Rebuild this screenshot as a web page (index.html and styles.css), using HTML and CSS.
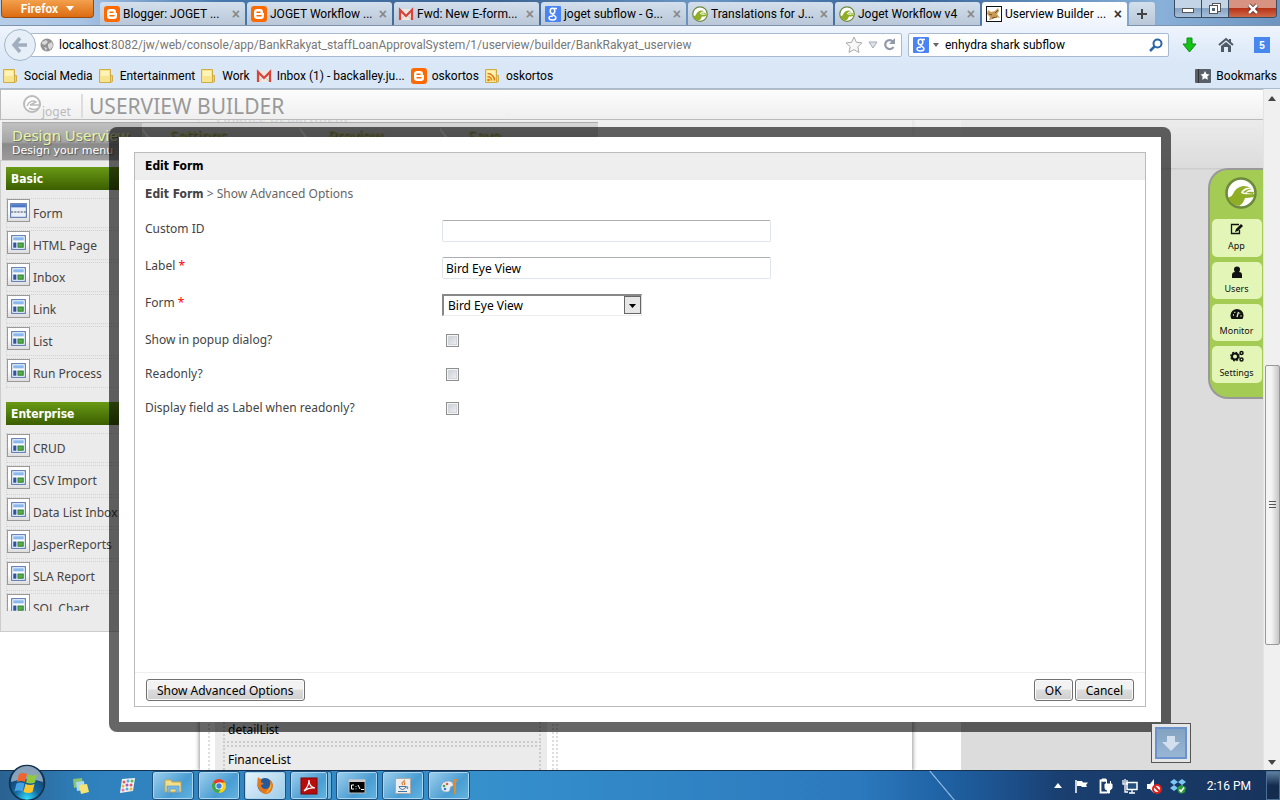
FILE: index.html
```html
<!DOCTYPE html>
<html lang="en">
<head>
    <meta charset="UTF-8">
    <meta name="viewport" content="width=device-width, initial-scale=1.0">
    <title>Userview Builder</title>
    <link rel="stylesheet" href="styles.css">
</head>
<body>
    <!-- shared icons -->
    <svg class="defs" width="0" height="0">
        <symbol id="blogger" viewBox="0 0 16 16">
            <rect width="16" height="16" rx="3" fill="#ff6a00"/>
            <path d="M6 3h3a3 3 0 0 1 3 3v1h1v3a3 3 0 0 1-3 3H6a3 3 0 0 1-3-3V6a3 3 0 0 1 3-3z" fill="#fff"/>
            <path d="M6 6.200h3M6 9.800h4" stroke="#ff6a00" stroke-width="1.400" stroke-linecap="round"/>
        </symbol>
        <symbol id="gmail" viewBox="0 0 16 16">
            <rect x="1" y="3" width="14" height="11" fill="#eee7e0"/>
            <path d="M3 13l5-5 5 5" fill="none" stroke="#cfc8c0"/>
            <path d="M2 14V4l6 6 6-6v10" fill="none" stroke="#d8433a" stroke-width="2.200"/>
        </symbol>
        <symbol id="google" viewBox="0 0 16 16">
            <rect width="16" height="16" rx="1" fill="#4a83f3"/>
            <ellipse cx="7.500" cy="5" rx="2.300" ry="2.700" fill="none" stroke="#fff" stroke-width="1.500"/>
            <path d="M9 2.500h3M8 8c-1 1 3 1.500 3 3.500s-1.500 2.500-3.500 2.500S4 13 4 11.800 6 10 8 10" fill="none" stroke="#fff" stroke-width="1.400"/>
        </symbol>
        <symbol id="joget" viewBox="0 0 32 32">
            <circle cx="16" cy="16" r="14.500" fill="#fff" stroke="#6c8a3c" stroke-width="2.500"/>
            <path d="M3 20q3 1 5-3 3-7 10-8 5 0 7 2-3-1-6 1-3 2-3 4 3 2 13 1v3q-6 1-9 1-2 6-6 8-9-1-11-9z" fill="#8fae26"/>
            <path d="M18 15q5-4 9-3-5 1-7 4zM21 16q3-2 8-1l-1 2z" fill="#8fae26"/>
        </symbol>
        <symbol id="folder" viewBox="0 0 16 16">
            <path d="M.5 1.500h11v13H.5z" fill="#f9e48e" stroke="#cfac45"/>
            <path d="M11.500 7.500h2v6l-2 1z" fill="#f0d36c" stroke="#cfac45"/>
            <path d="M2 3h8v5H2z" fill="#fff3b8"/>
        </symbol>
        <symbol id="widget" viewBox="0 0 20 20">
            <rect x="3.500" y="3.500" width="13" height="13" fill="#fff" stroke="#4a70b0"/>
            <rect x="5" y="5" width="10" height="3" fill="#8ab8ee"/>
            <rect x="5" y="10" width="3" height="5" fill="#2c55a4"/>
            <rect x="9.500" y="10.500" width="5" height="4" fill="#56ae4a" stroke="#35813a"/>
        </symbol>
    </svg>

    <header class="browser">
        <div class="tab-strip">
            <button class="firefox-button">Firefox <svg width="8" height="5"><path d="M0 0h8L4 5z" fill="#fff"/></svg></button>
            <div class="tabs">
                <button class="tab"><svg class="icon"><use href="#blogger"/></svg><span>Blogger: JOGET ...</span><i>×</i></button>
                <button class="tab"><svg class="icon"><use href="#blogger"/></svg><span>JOGET Workflow ...</span><i>×</i></button>
                <button class="tab"><svg class="icon"><use href="#gmail"/></svg><span>Fwd: New E-form...</span><i>×</i></button>
                <button class="tab"><svg class="icon"><use href="#google"/></svg><span>joget subflow - G...</span><i>×</i></button>
                <button class="tab"><svg class="icon"><use href="#joget"/></svg><span>Translations for J...</span><i>×</i></button>
                <button class="tab"><svg class="icon"><use href="#joget"/></svg><span>Joget Workflow v4</span><i>×</i></button>
                <button class="tab active"><svg class="icon" viewBox="0 0 16 16"><rect x=".5" y=".5" width="15" height="15" fill="#fff" stroke="#111"/><path d="M2 4l3 2 4-1 3-3 1 3-2 3 3 4-4-1-3 2-4 1 1-3-3-3z" fill="#c89a55"/><path d="M3 8l3 1M9 7l3-3M6 12l5-1" stroke="#765026"/></svg><span>Userview Builder ...</span><i>×</i></button>
                <button class="tab new-tab" aria-label="New tab"><svg width="12" height="12"><path d="M6 1v10M1 6h10" stroke="#444" stroke-width="2"/></svg></button>
            </div>
            <div class="window-buttons">
                <button aria-label="Minimize"><svg width="14" height="10"><rect x="1.500" y="4.500" width="11" height="4" fill="#fff" stroke="#555"/></svg></button>
                <button aria-label="Restore"><svg width="14" height="13"><rect x="4.500" y="1.500" width="8" height="8" fill="#fff" stroke="#555"/><rect x="1.500" y="3.500" width="8" height="8" fill="#fff" stroke="#555"/><rect x="4" y="6" width="3" height="3" fill="#567"/></svg></button>
                <button class="window-close" aria-label="Close"><svg width="14" height="12"><path d="M3 2l8 8M11 2l-8 8" stroke="#522" stroke-width="4"/><path d="M3 2l8 8M11 2l-8 8" stroke="#fff" stroke-width="2.500"/></svg></button>
            </div>
        </div>
        <div class="nav-bar">
            <button class="back-button" aria-label="Back"><svg width="18" height="16"><path d="M9 1L3 8l6 7M3 8h13" fill="none" stroke="#a0aebe" stroke-width="3.500"/></svg></button>
            <div class="url-box">
                <svg width="14" height="14" viewBox="0 0 14 14"><circle cx="7" cy="7" r="6.500" fill="#929292"/><path d="M2 4l4-2 2 2-3 3-3-1zM8 6l4-2 1 4-3 4-2-3zM4 9l3 1-1 3z" fill="#d8d8d8"/></svg>
                <label class="url"><b>localhost</b>:8082/jw/web/console/app/BankRakyat_staffLoanApprovalSystem/1/userview/builder/BankRakyat_userview</label>
                <svg width="50" height="18" viewBox="0 0 50 18"><path d="M9 1l2.400 5.300 5.600.6-4.200 3.800 1.200 5.800L9 13.600l-5 2.900 1.200-5.800L1 6.900l5.600-.6z" fill="#f8f8f8" stroke="#aaa"/><path d="M24 6h8l-4 6z" fill="#dde1ea" stroke="#a5acba"/><path d="M48 5.500A4.500 4.500 0 1 0 48.500 11" fill="none" stroke="#9099a6" stroke-width="2.200"/><path d="M50 2v6h-6z" fill="#9099a6"/></svg>
            </div>
            <div class="search-box">
                <svg class="icon"><use href="#google"/></svg>
                <svg width="6" height="4"><path d="M0 0h6L3 4z" fill="#666"/></svg>
                <input type="text" value="enhydra shark subflow" aria-label="Search">
                <svg width="14" height="14"><circle cx="8.500" cy="5.500" r="4" fill="none" stroke="#2c66a8" stroke-width="2"/><path d="M5.500 8.500L1 13" stroke="#2c66a8" stroke-width="2.500"/></svg>
            </div>
            <div class="nav-icons">
                <svg width="16" height="16"><path d="M5 1h5v6h4l-6.500 8L1 7h4z" fill="#14c414" stroke="#0a8f14"/></svg>
                <svg width="16" height="16"><path d="M1 8l7-6 7 6" fill="none" stroke="#4e5a66" stroke-width="2"/><path d="M3 9l5-4 5 4v6h-3v-5H6v5H3zM11 2h2v3h-2z" fill="#4e5a66"/></svg>
                <span class="calendar-icon">5</span>
            </div>
        </div>
        <nav class="bookmarks-bar">
            <a href="#"><svg class="icon"><use href="#folder"/></svg>Social Media</a>
            <a href="#"><svg class="icon"><use href="#folder"/></svg>Entertainment</a>
            <a href="#"><svg class="icon"><use href="#folder"/></svg>Work</a>
            <a href="#"><svg class="icon"><use href="#gmail"/></svg>Inbox (1) - backalley.ju...</a>
            <a href="#"><svg class="icon"><use href="#blogger"/></svg>oskortos</a>
            <a href="#"><svg class="icon" viewBox="0 0 16 16"><use href="#folder"/><circle cx="3.500" cy="12" r="1.300" fill="#e07b12"/><path d="M2.500 8.500a4 4 0 0 1 4 4M2.500 5.500a7 7 0 0 1 7 7" fill="none" stroke="#e07b12" stroke-width="1.500"/></svg>oskortos</a>
            <a class="all-bookmarks" href="#"><svg class="icon" viewBox="0 0 16 16"><rect y="1" width="16" height="14" rx="1" fill="#596069"/><path d="M3.500 1v14" stroke="#333"/><path d="M10 3l1.500 3 3 .4-2.200 2.200.6 3.200L10 10.300l-2.900 1.500.6-3.200L5.500 6.400l3-.4z" fill="#fff"/></svg>Bookmarks</a>
        </nav>
    </header>

    <main class="viewport">
        <div class="page">
            <div class="canvas">
                <div class="paper">
                    <h3>Finance Department</h3>
                    <div class="columns">
                        <div class="column">
                            <div class="menu-list">
                                <div class="menu-item">detailList</div>
                                <div class="menu-item">FinanceList</div>
                            </div>
                        </div>
                        <div class="column"></div>
                    </div>
                </div>
                <div class="backdrop"></div>
            </div>

            <div class="builder">
                <div class="builder-header">
                    <svg width="50" height="28" viewBox="0 0 50 28"><circle cx="9" cy="13" r="8" fill="#fff" stroke="#bbb" stroke-width="2"/><path d="M4 15c2-5 6-6 9-4l-6 3h11M6 17q5 3 9 0" fill="none" stroke="#bbb" stroke-width="1.500"/><text x="19" y="25" class="logo-text">joget</text></svg>
                    <h1>USERVIEW BUILDER</h1>
                </div>
                <div class="steps">
                    <div class="step current"><strong>Design Userview</strong><small>Design your menu</small></div>
                    <div class="step wide"><strong>Settings</strong></div>
                    <div class="step"><strong>Preview</strong></div>
                    <div class="step wide"><strong>Save</strong></div>
                </div>
                <aside class="palette">
                    <div class="palette-scroll">
                        <h2>Basic</h2>
                        <ul>
                            <li><svg viewBox="0 0 20 20"><rect x="2.500" y="3.500" width="15" height="13" fill="#e9f0fa" stroke="#5572a8"/><rect x="3" y="4" width="14" height="3" fill="#4a78c8"/><path d="M3 11.500h14" stroke="#444" stroke-dasharray="2 1"/></svg>Form</li>
                            <li><svg><use href="#widget"/></svg>HTML Page</li>
                            <li><svg><use href="#widget"/></svg>Inbox</li>
                            <li><svg><use href="#widget"/></svg>Link</li>
                            <li><svg><use href="#widget"/></svg>List</li>
                            <li><svg><use href="#widget"/></svg>Run Process</li>
                        </ul>
                        <h2>Enterprise</h2>
                        <ul>
                            <li><svg><use href="#widget"/></svg>CRUD</li>
                            <li><svg><use href="#widget"/></svg>CSV Import</li>
                            <li><svg><use href="#widget"/></svg>Data List Inbox</li>
                            <li><svg><use href="#widget"/></svg>JasperReports</li>
                            <li><svg><use href="#widget"/></svg>SLA Report</li>
                            <li><svg><use href="#widget"/></svg>SQL Chart</li>
                        </ul>
                    </div>
                </aside>
            </div>

            <nav class="admin-bar">
                <svg class="admin-logo"><use href="#joget"/></svg>
                <a href="#"><svg width="14" height="12"><path d="M9 1.500H1.500v9h8V7" fill="none" stroke="#111" stroke-width="1.300"/><path d="M5 9l1-3 5-5 2 2-5 5z" fill="#111"/></svg>App</a>
                <a href="#"><svg width="14" height="12"><circle cx="7" cy="3.500" r="3" fill="#111"/><path d="M2 12V9q0-3 3-3h4q3 0 3 3v3z" fill="#111"/></svg>Users</a>
                <a href="#"><svg width="14" height="12"><path d="M1.500 11a6.500 6.500 0 1 1 11 0z" fill="#111"/><path d="M7 9l1.500-5M3 7h1M4.500 4l.7.700M10 5l-.5.500M10.500 8h1" stroke="#e3f5bb" stroke-width="1.300"/></svg>Monitor</a>
                <a href="#"><svg width="14" height="12"><circle cx="5" cy="6.500" r="3" fill="none" stroke="#111" stroke-width="2"/><circle cx="5" cy="6.500" r="4.300" fill="none" stroke="#111" stroke-width="1.200" stroke-dasharray="1.800 1.570"/><circle cx="11.500" cy="3" r="1.500" fill="none" stroke="#111" stroke-width="1.500"/><circle cx="11.500" cy="9.500" r="1.500" fill="none" stroke="#111" stroke-width="1.500"/></svg>Settings</a>
            </nav>
        </div>

        <div class="scrollbar">
            <svg width="8" height="5"><path d="M0 5h8L4 0z" fill="#444"/></svg>
            <div class="scroll-track"><div class="scroll-thumb"><svg width="7" height="8"><path d="M0 .5h7M0 3.500h7M0 6.500h7" stroke="#555"/></svg></div></div>
            <svg width="8" height="5"><path d="M0 0h8L4 5z" fill="#444"/></svg>
        </div>

        <div class="dialog">
            <form class="dialog-panel">
                <h2>Edit Form</h2>
                <div class="fields">
                    <p class="breadcrumb"><b>Edit Form</b> &gt; Show Advanced Options</p>
                    <div class="field">
                        <label for="customId">Custom ID</label>
                        <input type="text" id="customId">
                    </div>
                    <div class="field">
                        <label for="label">Label <em>*</em></label>
                        <input type="text" id="label" value="Bird Eye View">
                    </div>
                    <div class="field">
                        <label for="form">Form <em>*</em></label>
                        <div class="select-wrap">
                            <select id="form"><option>Bird Eye View</option></select>
                            <svg width="17" height="18"><rect x=".5" y=".5" width="16" height="17" fill="#e6e6e6" stroke="#666"/><path d="M5 8h7l-3.500 4z" fill="#000"/></svg>
                        </div>
                    </div>
                    <div class="field check">
                        <label for="popup">Show in popup dialog?</label>
                        <input type="checkbox" id="popup">
                    </div>
                    <div class="field check">
                        <label for="readonly">Readonly?</label>
                        <input type="checkbox" id="readonly">
                    </div>
                    <div class="field check">
                        <label for="readonlyLabel">Display field as Label when readonly?</label>
                        <input type="checkbox" id="readonlyLabel">
                    </div>
                </div>
                <div class="dialog-footer">
                    <button type="button">Show Advanced Options</button>
                    <span>
                        <button type="button">OK</button>
                        <button type="button">Cancel</button>
                    </span>
                </div>
            </form>
        </div>

        <button class="scroll-down" aria-label="Scroll down"><svg width="18" height="16"><path d="M5 1h8v6h5l-9 9-9-9h5z" fill="#d3dfec"/></svg></button>
    </main>

    <footer class="taskbar">
        <button class="start" aria-label="Start">
            <svg width="38" height="38" viewBox="0 0 38 38">
                <defs>
                    <radialGradient id="orb" cx=".5" cy=".95" r=".8"><stop offset="0" stop-color="#35e0ff"/><stop offset=".45" stop-color="#13679f"/><stop offset="1" stop-color="#143c63"/></radialGradient>
                </defs>
                <circle cx="19" cy="19" r="17.500" fill="url(#orb)" stroke="#12314e" stroke-width="1.500"/>
                <path d="M3 18a16 16 0 0 1 32 0Q19 12 3 18z" fill="#c6d7e6" opacity=".65"/>
                <path d="M11 10q4-2 8 0l-2 8q-4-2-8 0z" fill="#f0642d"/>
                <path d="M20 10.500q5 2 9 0l-2 8q-4 2-9 0z" fill="#92c83e"/>
                <path d="M8.500 19.500q4-2 8 0l-2 8q-4-2-8 0z" fill="#46a2e6"/>
                <path d="M17.500 20q5 2 9 0l-2 8q-4 2-9 0z" fill="#fcc72c"/>
            </svg>
        </button>
        <div class="tasks">
            <button class="task pinned" aria-label="Notes"><svg viewBox="0 0 18 18"><path d="M1 2l9-1 1 8-9 2z" fill="#8cc36d"/><path d="M4 5l8-1 1 9-8 1z" fill="#a9dcf2"/><path d="M7 8l8-1 2 8-8 2z" fill="#f6e373"/></svg></button>
            <button class="task pinned" aria-label="Colors"><svg viewBox="0 0 18 18"><path d="M4 2l13-1-2 13-13 2z" fill="#f2f2f2"/><g fill="#e45b5b"><circle cx="6" cy="5" r="1.500"/><circle cx="13" cy="8" r="1.500"/></g><g fill="#4db1e3"><circle cx="10" cy="4" r="1.500"/><circle cx="9" cy="12" r="1.500"/></g><g fill="#e7b83b"><circle cx="5" cy="9" r="1.500"/><circle cx="13" cy="12" r="1.500"/></g><circle cx="9" cy="8" r="1.500" fill="#a65bc4"/><circle cx="14" cy="4" r="1.500" fill="#65b84a"/><circle cx="5" cy="13" r="1.500" fill="#eb76a7"/></svg></button>
            <button class="task" aria-label="Explorer"><svg viewBox="0 0 18 18"><path d="M1 3h6l1 2h9v10H1z" fill="#f3df8b" stroke="#c4a74a"/><path d="M3 16V9h12v7h-3v-4H6v4z" fill="#78b9e6" stroke="#4b8fc4" stroke-width=".6"/></svg></button>
            <button class="task" aria-label="Chrome"><svg viewBox="0 0 18 18"><circle cx="9" cy="9" r="7" fill="#fcd116"/><path d="M9 9L2.900 5.500A7 7 0 0 1 15.100 5.500H9z" fill="#e33b2e"/><path d="M9 9l-6.100-3.500A7 7 0 0 0 8.500 16l3-5z" fill="#3aa757"/><circle cx="9" cy="9" r="3.600" fill="#fff"/><circle cx="9" cy="9" r="2.700" fill="#3f7fe0"/></svg></button>
            <button class="task current" aria-label="Firefox"><svg viewBox="0 0 18 18"><circle cx="9" cy="8.500" r="7.500" fill="#245a9c"/><path d="M1.500 3Q1 9 3 12q3 5.500 8 5 6-2 6-9-1-4-4-6 2 3 1 6-1 4-5 4-4-1-4-4l3-1-3-2q0-2 1-3-3 0-4-2z" fill="#e5771e"/><path d="M15 5q2 9-6 11 4-3 5-6z" fill="#f7b731"/></svg></button>
            <button class="task stacked" aria-label="Reader"><svg viewBox="0 0 18 18"><rect x="1" y="1" width="16" height="16" fill="#b90d0d" stroke="#7d0505"/><path d="M4 14q5-5 5-11 0 7 6 8-6-1-11 3z" fill="none" stroke="#fff" stroke-width="1.200"/></svg></button>
            <button class="task" aria-label="Command prompt"><svg viewBox="0 0 18 18"><rect x="1" y="3" width="16" height="13" fill="#000" stroke="#bbb"/><rect x="1" y="2.500" width="16" height="2.500" fill="#c9c9c9"/><path d="M6 8H3.500v4H6M8 9v.8M8 11.500v.8M10 8l2 4M13 12.500h3" fill="none" stroke="#fff"/></svg></button>
            <button class="task" aria-label="Java"><svg viewBox="0 0 18 18"><rect x="1.500" y="1.500" width="15" height="15" fill="#eee" stroke="#aaa"/><path d="M9 8q-2-2 0-3t1-2M11 8q-1-1 0-3" fill="none" stroke="#e07c28" stroke-width="1.200"/><path d="M5 9.500h7q-1 3-3.500 3T5 9.500M12 10q3-1 1 2M4 14.500h9" fill="none" stroke="#47739f"/></svg></button>
            <button class="task" aria-label="Paint"><svg viewBox="0 0 18 18"><path d="M1 10q1-6 8-6 5 1 4 5-3 0-3 3 0 3-3 3-6 0-6-5z" fill="#e8edf2" stroke="#8fa1b1" stroke-width=".6"/><circle cx="4" cy="9" r="1.300" fill="#48a44a"/><circle cx="7" cy="7" r="1.300" fill="#e05b3f"/><circle cx="5" cy="12" r="1.300" fill="#3b7ed1"/><path d="M14 17V6l-1-4h4l-1 4v11z" fill="#e58b2a"/></svg></button>
        </div>
        <div class="tray">
            <svg width="8" height="5"><path d="M0 5h8L4 0z" fill="#fff"/></svg>
            <svg width="16" height="16"><path d="M2 2v13" stroke="#fff" stroke-width="1.500"/><path d="M3 3h5l1 1.500h5l-2 2.500 1 2H8L7 8H3z" fill="#fff"/></svg>
            <svg width="16" height="16"><path d="M9 14.500H2.500v-12H9" fill="none" stroke="#fff" stroke-width="1.800"/><path d="M4 1h4v2H4zM7 6h7v4q-1 2-2.500 2v3h-2v-3Q7 12 7 10zM8.500 3v4M12.500 3v4" fill="#fff" stroke="#fff"/></svg>
            <svg width="16" height="16"><rect x="5" y="4.500" width="10" height="7" fill="#27507e" stroke="#fff" stroke-width="1.500"/><path d="M10 12v3M7 15h6M3 7v7h3M1 2v4h4V2M3 1v4" fill="none" stroke="#fff" stroke-width="1.300"/></svg>
            <svg width="16" height="16"><path d="M1 6h3l4-5v14l-4-4H1z" fill="#fff"/><circle cx="11" cy="11" r="4" fill="#fff" stroke="#e0231c" stroke-width="2"/><path d="M8 8l6 6" stroke="#e0231c" stroke-width="2"/></svg>
            <svg width="16" height="16"><path d="M4 1l4 3-4 3-4-3zM12 1l4 3-4 3-4-3zM4 7l4 3-4 3-4-3zM12 7l4 3-4 3-4-3z" fill="#7cc7f4"/><circle cx="11.500" cy="11.500" r="4" fill="#2c9c37"/><path d="M9.500 11.500l1.500 2 3-4" fill="none" stroke="#fff" stroke-width="1.400"/></svg>
            <time>2:16 PM</time>
        </div>
        <button class="show-desktop" aria-label="Show desktop"></button>
    </footer>
</body>
</html>
```

FILE: styles.css
```css
* {
    box-sizing: border-box;
}
body {
    margin: 0;
    display: flex;
    flex-direction: column;
    height: 100vh;
    overflow: hidden;
    background: #fff;
    font-family: "Noto Sans", Tahoma, sans-serif;
    font-size: 12px;
}
button, input, select {
    font: inherit;
    margin: 0;
}
svg {
    display: block;
    flex: none;
}
a {
    color: inherit;
    text-decoration: none;
}
.defs {
    position: absolute;
}
.icon {
    width: 16px;
    height: 16px;
}

/* browser */
.browser {
    flex: none;
    font-family: Roboto, "Open Sans", sans-serif;
    background: linear-gradient(#eef4fd 26px, #d9e7f7 64px);
    border-bottom: 1px solid #a9bbd0;
}
.tab-strip {
    display: flex;
    align-items: flex-start;
    height: 26px;
    padding: 0 3px 0 1px;
    background: linear-gradient(90deg, #b5cde8, #a9c5e5 80px, #4678ad 220px, #3d6594 500px, #6a96c4 700px, #325f95 900px, #88b0d8 1160px, #6c94bf);
    border-bottom: 1px solid #7d92ad;
}
.firefox-button {
    width: 93px;
    height: 18px;
    padding: 0;
    display: flex;
    align-items: center;
    justify-content: center;
    gap: 8px;
    border: 1px solid #9c4a0c;
    border-top: none;
    border-radius: 0 0 4px 4px;
    background: linear-gradient(#f3a04c, #dc6c12);
    color: #fff;
    font-weight: 600;
}
.tabs {
    display: flex;
    flex: 1;
    gap: 2px;
    padding: 2px 0 0 6px;
}
.tab {
    display: flex;
    align-items: center;
    width: 145px;
    height: 23px;
    padding: 0 5px 0 4px;
    gap: 3px;
    border: none;
    border-radius: 3px 3px 0 0;
    background: linear-gradient(#d3dfec, #b9c7d8);
    white-space: nowrap;
    text-align: left;
}
.tab span {
    flex: 1;
}
.tab i {
    color: #888;
    font: bold 14px "Liberation Sans", sans-serif;
}
.tab.active {
    height: 24px;
    background: linear-gradient(#fff, #eef4fd);
}
.tab.active i {
    color: #333;
}
.tab.new-tab {
    width: 26px;
    padding: 0 7px;
}
.window-buttons {
    display: flex;
    border: 1px solid #384c64;
    border-top: none;
    border-radius: 0 0 4px 4px;
    overflow: hidden;
}
.window-buttons button {
    display: flex;
    align-items: center;
    justify-content: center;
    width: 27px;
    height: 17px;
    padding: 0;
    border: none;
    border-right: 1px solid #384c64;
    background: linear-gradient(#c3d4e7 45%, #86a3c3 50%, #a8c0da);
}
.window-buttons .window-close {
    width: 47px;
    border: none;
    background: linear-gradient(#d89282 45%, #b73219 50%, #cf6a48);
}
.nav-bar {
    display: flex;
    align-items: center;
    height: 37px;
    padding: 0 10px 0 4px;
}
.back-button {
    position: relative;
    display: flex;
    align-items: center;
    justify-content: center;
    width: 32px;
    height: 32px;
    padding: 0;
    border: 1px solid #a4b5c8;
    border-radius: 50%;
    background: #e6eef8;
}
.url-box, .search-box {
    display: flex;
    align-items: center;
    height: 24px;
    border: 1px solid #a7bacf;
    border-radius: 2px;
    background: #fff;
}
.url-box {
    flex: 1;
    gap: 5px;
    margin-left: -6px;
    padding: 0 6px 0 9px;
}
.url {
    flex: 1;
    color: #777;
    white-space: nowrap;
}
.url b {
    color: #000;
    font-weight: normal;
}
.search-box {
    width: 261px;
    margin-left: 6px;
    padding: 0 5px 0 4px;
    gap: 4px;
}
.search-box input {
    flex: 1;
    min-width: 0;
    padding: 0 2px;
    border: none;
    background: none;
}
.nav-icons {
    display: flex;
    align-items: center;
    gap: 20px;
    margin-left: 13px;
}
.calendar-icon {
    width: 16px;
    height: 16px;
    background: #4787ee;
    color: #fff;
    font: bold 10px/17px "Liberation Sans", sans-serif;
    text-align: center;
}
.bookmarks-bar {
    display: flex;
    align-items: center;
    gap: 6px;
    height: 25px;
    padding: 0 3px;
    white-space: nowrap;
}
.bookmarks-bar a {
    display: flex;
    align-items: center;
    gap: 5px;
}
.bookmarks-bar .all-bookmarks {
    margin-left: auto;
}

/* page */
.viewport {
    position: relative;
    display: flex;
    flex: 1;
    min-height: 0;
}
.page {
    display: grid;
    grid-template: minmax(0, 1fr) / minmax(0, 1fr);
    flex: 1;
    position: relative;
    overflow: hidden;
}
.canvas, .builder {
    grid-area: 1 / 1;
    min-height: 0;
}
.canvas {
    display: flex;
    gap: 49px;
    padding-left: 200px;
}
.paper {
    display: flex;
    flex-direction: column;
    justify-content: space-between;
    width: 712px;
    background: #fff;
    box-shadow: 0 0 4px 1px #999;
}
.paper h3 {
    margin: 20px 0 0 16px;
    font-size: 13px;
    line-height: 18px;
    color: #666;
}
.backdrop {
    flex: 1;
    background: #dcdcdc;
}
.columns {
    display: flex;
    gap: 2px;
    padding-left: 8px;
}
.column {
    border: 2px dotted #ddd;
    border-width: 0 2px;
    padding: 0 5px;
}
.column:last-child {
    border-right: none;
}
.menu-list {
    width: 332px;
    padding: 0 6px 0 8px;
    background: #ebebeb;
}
.menu-item {
    height: 28px;
    margin-top: 2px;
    padding: 0 3px;
    border: 2px dotted #ccc;
    line-height: 25px;
}
.menu-item:last-child {
    height: 25px;
    border-bottom: none;
}
.builder-header {
    display: flex;
    align-items: center;
    height: 31px;
    padding-left: 22px;
    border: 1px solid #bbb;
    border-right: none;
    background: linear-gradient(#fdfdfd, #efefef);
}
.builder-header h1 {
    margin: 2px 0 0 8px;
    padding-left: 6px;
    border-left: 2px solid #ddd;
    color: #999;
    font-size: 21px;
    font-weight: normal;
    line-height: 24px;
}
.logo-text {
    fill: #bbb;
    font-size: 12px;
}
.steps {
    display: flex;
    height: 48px;
    padding: 2px 0 7px 2px;
    background: linear-gradient(rgba(238, 238, 238, .85), rgba(220, 220, 220, .8));
    box-shadow: 0 1px 2px rgba(0, 0, 0, .1);
}
.step {
    position: relative;
    width: 140px;
    padding: 3px 0 0 28px;
    overflow: hidden;
    border-top: 1px solid #aaa;
    background: linear-gradient(#d6d6d6, #aaa);
    line-height: 18px;
    white-space: nowrap;
}
.step.wide {
    width: 158px;
}
.step::before {
    content: "";
    position: absolute;
    left: 9px;
    top: -6px;
    height: 50px;
    border-left: 2px solid #eee;
    transform: rotate(-38deg);
}
.step.current {
    padding-left: 10px;
    background: linear-gradient(#c0c0c0, #a5a5a5 50%, #8a8a8a 55%, #9c9c9c);
}
.step.current::before {
    display: none;
}
.step strong {
    display: block;
    color: #b6c35a;
    font-size: 15px;
    font-weight: normal;
    text-shadow: 1px 1px 1px #666;
}
.step.current strong {
    color: #e6f7a6;
}
.step small {
    display: block;
    color: #fff;
    font: 11px/14px "DejaVu Sans", sans-serif;
    text-shadow: 1px 1px 1px #555;
}
.palette {
    width: 190px;
    margin-top: -8px;
    padding: 6px 5px 20px;
    border: 1px solid #ccc;
    background: #ebebeb;
    position: relative;
}
.palette-scroll {
    height: 444px;
    overflow: hidden;
}
.palette h2 {
    height: 23px;
    margin: 0 0 8px;
    padding-left: 5px;
    background: linear-gradient(#699a15, #3b5e00);
    color: #fff;
    font: bold 12px/25px "DejaVu Sans Condensed", sans-serif;
}
.palette ul {
    display: flex;
    flex-direction: column;
    gap: 2px;
    margin: 0 0 14px;
    padding: 0;
    list-style: none;
}
.palette li {
    display: flex;
    gap: 3px;
    height: 30px;
    border: 1px dotted #d2d2d2;
    color: #444;
    line-height: 29px;
}
.palette li svg {
    width: 23px;
    height: 23px;
    border: 1px solid #999;
    background: linear-gradient(#fff 50%, #ddd);
}
.admin-bar {
    position: absolute;
    top: 79px;
    right: 0;
    display: flex;
    flex-direction: column;
    align-items: center;
    gap: 5px;
    width: 55px;
    padding: 7px 2px 14px;
    border: 2px solid #999;
    border-right: none;
    border-radius: 20px 0 0 20px;
    background: #a4cc55;
}
.admin-logo {
    width: 32px;
    height: 32px;
    margin: 0 0 5px 8px;
}
.admin-bar a {
    display: flex;
    flex-direction: column;
    align-items: center;
    gap: 4px;
    width: 50px;
    height: 38px;
    padding-top: 4px;
    border-radius: 5px;
    background: #e3f6b8;
    color: #111;
    font-size: 9px;
    line-height: 14px;
}
.admin-bar a + a {
    height: 37px;
}

.scrollbar {
    display: flex;
    flex-direction: column;
    align-items: center;
    width: 17px;
    padding: 7px 0 5px;
    border-left: 1px solid #e3e3e3;
    background: #f0f0f0;
}
.scroll-track {
    display: flex;
    flex: 1;
    width: 15px;
    padding: 264px 0 115px;
}
.scroll-thumb {
    display: flex;
    align-items: center;
    justify-content: center;
    flex: 1;
    border: 1px solid #999;
    border-radius: 2px;
    background: linear-gradient(90deg, #f4f4f4 40%, #c6c6c6);
}

/* dialog */
.dialog {
    position: absolute;
    inset: 38px 109px;
    padding: 15px;
    border: 10px solid rgba(0, 0, 0, .6);
    border-radius: 8px;
    background: #fff;
    background-clip: padding-box;
}
.dialog-panel {
    display: flex;
    flex-direction: column;
    height: 100%;
    border: 1px solid #bbb;
}
.dialog h2 {
    margin: 0;
    padding-left: 10px;
    background: #eee;
    font: bold 12px/27px "DejaVu Sans Condensed", sans-serif;
}
.fields {
    flex: 1;
    padding: 0 10px;
    color: #444;
}
.breadcrumb {
    margin: 0 0 12px;
    color: #666;
    line-height: 27px;
}
.breadcrumb b {
    color: #444;
    font-family: "DejaVu Sans Condensed", sans-serif;
}
.field {
    display: flex;
    height: 22px;
    margin-bottom: 15px;
}
.field label {
    width: 297px;
    line-height: 18px;
}
.field em {
    color: #f00;
    font-style: normal;
}
.field input[type="text"] {
    width: 329px;
    padding: 2px 3px;
    border: 1px solid #e0e4ec;
    border-top-color: #abadb3;
    border-radius: 2px;
}
.select-wrap {
    position: relative;
    width: 200px;
}
.select-wrap select {
    width: 100%;
    height: 22px;
    padding: 0 4px;
    border: 2px solid #888;
    border-right: 1px solid #ddd;
    border-bottom: 1px solid #eee;
    border-radius: 0;
    background: #fff;
    appearance: none;
}
.select-wrap svg {
    position: absolute;
    top: 2px;
    right: 1px;
    pointer-events: none;
}
.field.check {
    height: 18px;
    margin-bottom: 16px;
}
.field input[type="checkbox"] {
    width: 13px;
    height: 13px;
    margin: 3px 4px;
    appearance: none;
    border: 1px solid #8e8f8f;
    background: linear-gradient(135deg, #c5cad2, #f4f4f4);
    box-shadow: inset 0 0 0 1px #f4f4f4, inset 0 0 0 2px #d3d7dd;
}
.dialog-footer {
    display: flex;
    justify-content: space-between;
    padding: 6px 11px 5px;
    border-top: 1px solid #eee;
}
.dialog-footer span {
    display: flex;
    gap: 2px;
}
.dialog-footer button {
    height: 22px;
    padding: 0 10px;
    border: 1px solid #707070;
    border-radius: 3px;
    background: linear-gradient(#f2f2f2 45%, #dcdcdc 50%, #cfcfcf);
    box-shadow: inset 0 0 0 1px #fafafa;
    color: #000;
}
.scroll-down {
    position: absolute;
    right: 89px;
    bottom: 7px;
    display: flex;
    align-items: center;
    justify-content: center;
    width: 40px;
    height: 40px;
    padding: 0;
    border: 1px solid #555;
    background: linear-gradient(#7f9fbd, #9cb9d8);
    box-shadow: inset 0 0 0 3px #e6e6e6, inset 0 0 0 5px #6a92cf;
}

/* taskbar */
.taskbar {
    position: relative;
    display: flex;
    flex: none;
    height: 30px;
    border-top: 1px solid #16314f;
    background: linear-gradient(57deg, transparent 935px, transparent), linear-gradient(90deg, #2a6291, #2f81bd 90px, #3590cc 480px, #2c79bd 860px, #1f63a5 940px, #1c4f8a 1010px, #1a3f70 1060px, #17335c);
    font-family: Roboto, "Open Sans", sans-serif;
}
/* light streak across the bar */
.taskbar::before {
    content: "";
    position: absolute;
    inset: 0;
    background: linear-gradient(to right, transparent 46%, rgba(190, 220, 250, .8) 50%, transparent 54%) 925px 0 / 34px 100% no-repeat;
    transform: skewX(40deg);
    transform-origin: 942px 50%;
    clip-path: inset(0 320px 0 900px);
}
.start {
    position: relative;
    width: 54px;
    height: 38px;
    margin-top: -7px;
    padding: 0 8px;
    border: none;
    background: none;
}
.tasks {
    display: flex;
    flex: 1;
    gap: 4px;
    padding-left: 6px;
}
.task {
    display: flex;
    align-items: center;
    justify-content: center;
    width: 42px;
    height: 29px;
    padding: 0;
    border: 1px solid #1d4f7a;
    border-radius: 3px;
    background: linear-gradient(135deg, #9fd0ee, #4a9dd2 60%, #62b4e0);
    box-shadow: inset 0 0 0 1px #a9d6f0;
}
.task svg {
    width: 18px;
    height: 18px;
}
.task.pinned {
    border: none;
    background: none;
    box-shadow: none;
}
.task.current {
    background: linear-gradient(135deg, #e6f4fc, #9ccbe8);
}
.task.stacked {
    width: 38px;
    margin-right: 4px;
    box-shadow: inset 0 0 0 1px #a9d6f0, 4px 0 0 -1px #6db5de, 4px 0 0 #1d4f7a;
}
.tray {
    display: flex;
    align-items: center;
    gap: 8px;
    padding-right: 15px;
    color: #fff;
}
.tray svg:first-child {
    margin-right: 4px;
}
.tray time {
    margin-left: 13px;
}
.show-desktop {
    width: 14px;
    border: 1px solid #4d6f96;
    background: linear-gradient(#5f7f9f, #142c4d 50%);
}
```
